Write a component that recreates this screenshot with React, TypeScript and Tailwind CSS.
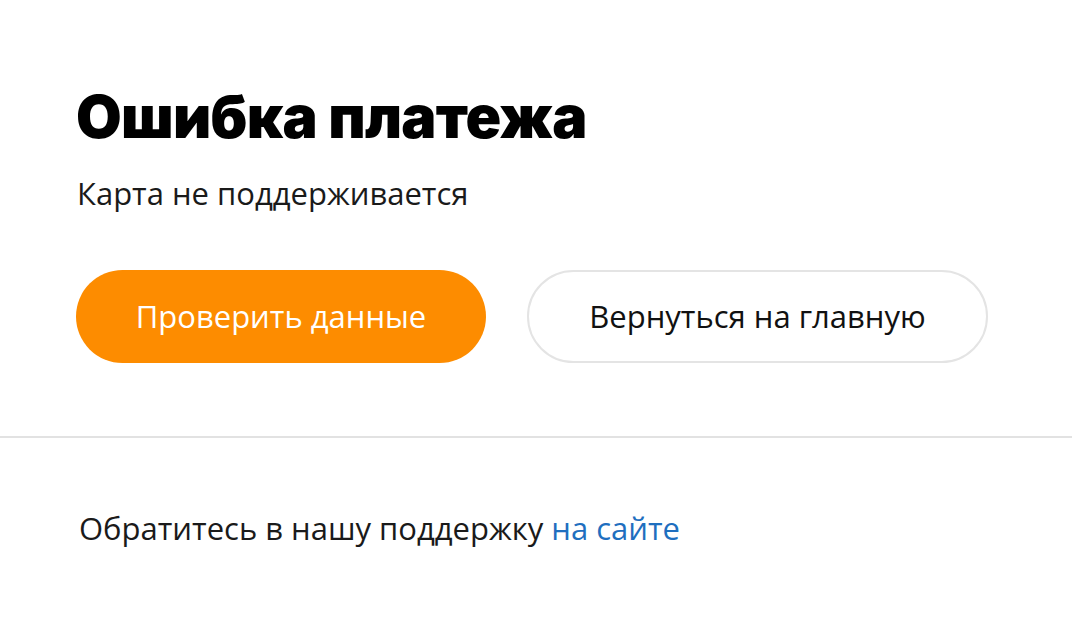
export default function App() {
  return (
    <div className="w-[1072px] h-[628px] bg-white overflow-hidden" style={{ fontFamily: '"Open Sans", "Noto Sans", sans-serif' }}>
      <div className="pl-[76px] pr-[84px] pt-[82px] h-[436px]">
        <h1 className="text-[59px] leading-[70px] font-black text-black tracking-[-0.7px]" style={{ fontFamily: 'Inter, sans-serif' }}>
          Ошибка платежа
        </h1>
        <p className="mt-[21px] ml-[1px] text-[31px] leading-[40px] text-[#1a1a1a]">Карта не поддерживается</p>
        <div className="mt-[57px] flex gap-[41px]">
          <button className="w-[410px] h-[93px] rounded-full bg-[#fd8c00] text-white text-[31px]">
            Проверить данные
          </button>
          <button className="w-[461px] h-[93px] rounded-full bg-white border-2 border-[#e4e4e4] text-[#111] text-[31px]">
            Вернуться на главную
          </button>
        </div>
      </div>
      <div className="h-[2px] bg-[#e2e2e2]" />
      <div className="pl-[79px] pt-[70px]">
        <p className="text-[31px] leading-[40px] text-[#1a1a1a]">
          Обратитесь в нашу поддержку <a className="text-[#1f6fbf]">на сайте</a>
        </p>
      </div>
    </div>
  );
}
